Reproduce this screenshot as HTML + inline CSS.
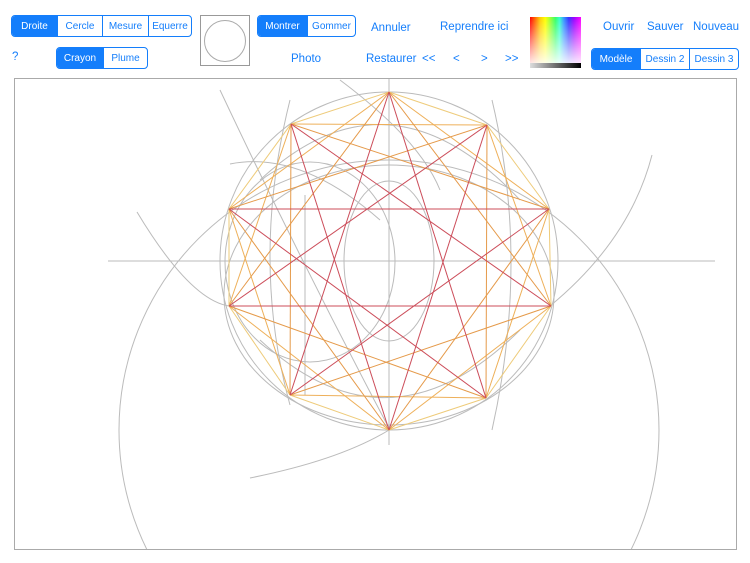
<!DOCTYPE html>
<html><head><meta charset="utf-8"><style>
html,body{margin:0;width:750px;height:563px;overflow:hidden}
body{background:#fff;font-family:"Liberation Sans",sans-serif;position:relative}
.seg{position:absolute;display:flex;border:1px solid #147efb;border-radius:4px;overflow:hidden;height:20px}
.seg div{font-size:10px;color:#147efb;line-height:21px;text-align:center;border-left:1px solid #147efb;box-sizing:border-box}
.seg div:first-child{border-left:none}
.seg .on{background:#147efb;color:#fff}
.t{position:absolute;color:#147efb;font-size:11.5px;white-space:nowrap}
</style></head><body>
<div class="seg" style="left:11px;top:15px;width:179px"><div class="on" style="width:45px">Droite</div><div style="width:45px">Cercle</div><div style="width:46px">Mesure</div><div style="width:43px">Equerre</div></div>
<div class="seg" style="left:56px;top:47px;width:90px"><div class="on" style="width:46px">Crayon</div><div style="width:44px">Plume</div></div>
<div style="position:absolute;left:200px;top:15px;width:50px;height:51px;border:1px solid #999;box-sizing:border-box"></div>
<div style="position:absolute;left:204px;top:20px;width:42px;height:42px;border:1px solid #aaa;border-radius:50%;box-sizing:border-box"></div>
<div class="seg" style="left:257px;top:15px;width:97px"><div class="on" style="width:49px">Montrer</div><div style="width:48px">Gommer</div></div>
<div class="t" style="left:12px;top:51px">?</div>
<div class="t" style="left:371px;top:22px">Annuler</div>
<div class="t" style="left:440px;top:21px">Reprendre ici</div>
<div class="t" style="left:291px;top:53px">Photo</div>
<div class="t" style="left:366px;top:53px">Restaurer</div>
<div class="t" style="left:422px;top:53px">&lt;&lt;</div>
<div class="t" style="left:453px;top:53px">&lt;</div>
<div class="t" style="left:481px;top:53px">&gt;</div>
<div class="t" style="left:505px;top:53px">&gt;&gt;</div>
<div class="t" style="left:603px;top:21px">Ouvrir</div>
<div class="t" style="left:647px;top:21px">Sauver</div>
<div class="t" style="left:693px;top:21px">Nouveau</div>
<div class="seg" style="left:591px;top:48px;width:146px"><div class="on" style="width:48px">Modèle</div><div style="width:49px">Dessin 2</div><div style="width:49px">Dessin 3</div></div>
<div style="position:absolute;left:530px;top:17px;width:51px;height:46px;background:linear-gradient(to bottom,rgba(255,255,255,0),rgba(255,255,255,.9)),linear-gradient(to right,#f00 0,#f60 10%,#fc0 20%,#ff0 30%,#9f3 40%,#3f6 50%,#3fc 58%,#39f 66%,#33f 76%,#90f 86%,#f0f 100%)"></div>
<div style="position:absolute;left:530px;top:63px;width:51px;height:5px;background:linear-gradient(to right,#ddd,#000)"></div>
<div style="position:absolute;left:14px;top:78px;width:723px;height:472px;border:1px solid #aaa;box-sizing:border-box"></div>
<svg style="position:absolute;left:0;top:0" width="750" height="563">
<defs><clipPath id="c"><rect x="15" y="79" width="721" height="470"/></clipPath></defs>
<g clip-path="url(#c)" fill="none" stroke="#bbb" stroke-width="1">
<line x1="108" y1="261" x2="715" y2="261"/>
<line x1="389" y1="78" x2="389" y2="445"/>
<line x1="305" y1="195" x2="305" y2="395"/>
<circle cx="389" cy="261" r="169"/>
<circle cx="389" cy="430" r="270"/>
<path d="M137 212 Q190 300 229 306"/>
<path d="M652 155 Q630 240 550 306"/>
<path d="M250 478 Q340 460 389 430"/>
<path d="M220 90 Q300 260 390 430"/>
<path d="M340 80 Q420 140 440 190"/>
<path d="M230 164 Q300 150 380 220"/>
<ellipse cx="310" cy="262" rx="85" ry="100"/>
<ellipse cx="389" cy="261" rx="45" ry="80"/>
<ellipse cx="389" cy="295" rx="165" ry="130"/>
<path d="M290 100 Q250 260 290 405"/>
<path d="M492 100 Q530 260 492 430"/>
<path d="M260 180 Q389 60 520 200"/>
<path d="M260 340 Q389 460 520 330"/>
</g>
<g id="star" fill="none" stroke-width="1"></g>
</svg>
<script>
var g=document.getElementById('star');
var P=[[389,92],[487,125],[549,209],[551,306],[486,398],[389,430],[290,395],[229,306],[229,209],[291,124]];
var cols={1:'#eecb7a',2:'#eeb05a',3:'#e59a4a',4:'#cc4d5a'};
[1,2,3,4].forEach(function(s){for(var i=0;i<10;i++){var j=(i+s)%10;var l=document.createElementNS('http://www.w3.org/2000/svg','line');l.setAttribute('x1',P[i][0]);l.setAttribute('y1',P[i][1]);l.setAttribute('x2',P[j][0]);l.setAttribute('y2',P[j][1]);l.setAttribute('stroke',cols[s]);g.appendChild(l);}});
</script>
</body></html>
